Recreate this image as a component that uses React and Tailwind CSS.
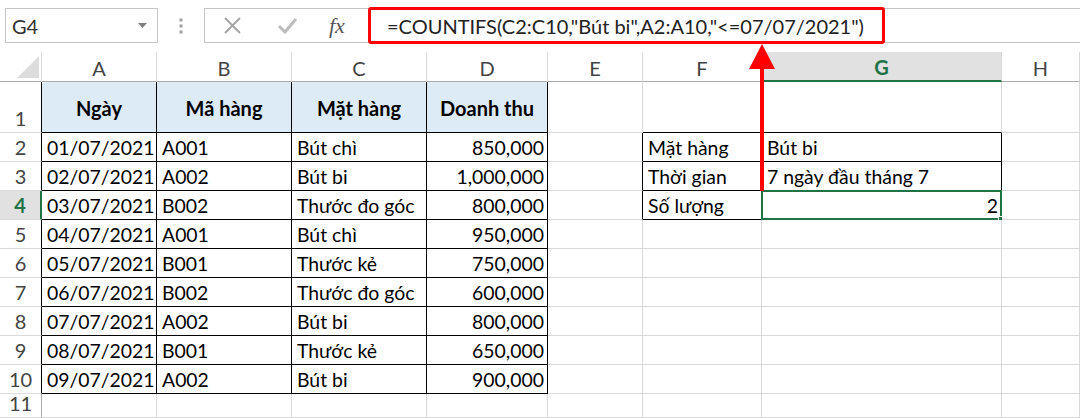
import React from 'react';

const COLS = ['A', 'B', 'C', 'D', 'E', 'F', 'G', 'H'];
const DATA = [
  ['01/07/2021', 'A001', 'Bút chì', '850,000'],
  ['02/07/2021', 'A002', 'Bút bi', '1,000,000'],
  ['03/07/2021', 'B002', 'Thước đo góc', '800,000'],
  ['04/07/2021', 'A001', 'Bút chì', '950,000'],
  ['05/07/2021', 'B001', 'Thước kẻ', '750,000'],
  ['06/07/2021', 'B002', 'Thước đo góc', '600,000'],
  ['07/07/2021', 'A002', 'Bút bi', '800,000'],
  ['08/07/2021', 'B001', 'Thước kẻ', '650,000'],
  ['09/07/2021', 'A002', 'Bút bi', '900,000'],
];
const HEAD = ['Ngày', 'Mã hàng', 'Mặt hàng', 'Doanh thu'];
const F_COL = ['Mặt hàng', 'Thời gian', 'Số lượng'];
const G_COL = ['Bút bi', '7 ngày đầu tháng 7', '2'];

const inT1 = (r, c) => r >= 1 && r <= 10 && c >= 0 && c <= 3;
const inT2 = (r, c) => r >= 2 && r <= 4 && c >= 5 && c <= 6;
const inAny = (r, c) => inT1(r, c) || inT2(r, c);

function content(r, c) {
  if (r === 1 && c < 4) return { text: HEAD[c], kind: 'head' };
  if (r >= 2 && r <= 10 && c < 4) return { text: DATA[r - 2][c], kind: c === 3 ? 'right' : 'left' };
  if (r >= 2 && r <= 4 && c === 5) return { text: F_COL[r - 2], kind: 'left' };
  if (r >= 2 && r <= 4 && c === 6) return { text: G_COL[r - 2], kind: r === 4 ? 'right' : 'left' };
  return null;
}

function Cell({ r, c }) {
  const rb = inAny(r, c) || inAny(r, c + 1);
  const bb = inAny(r, c) || inAny(r + 1, c);
  const ct = content(r, c);
  const align =
    ct && ct.kind === 'head'
      ? 'justify-center font-bold text-[20px]'
      : ct && ct.kind === 'right'
      ? 'justify-end pr-[3px] text-[19.4px]'
      : 'justify-start pl-[5px] text-[19.4px]';
  const fill = ct && ct.kind === 'head' ? 'bg-[#ddebf7]' : 'bg-white';
  const selected = r === 4 && c === 6;
  return (
    <div
      className={[
        'relative flex items-center border-r border-b whitespace-nowrap text-black',
        rb ? 'border-r-black' : 'border-r-[#d9d9d9]',
        bb ? 'border-b-black' : 'border-b-[#d9d9d9]',
        align,
        fill,
      ].join(' ')}
    >
      {ct ? <span className="leading-none pt-[1px]">{ct.text}</span> : null}
      {selected ? (
        <>
          <div className="absolute -left-[1px] -top-[1px] -right-[1px] -bottom-[1px] border-2 border-[#217346]" />
          <div className="absolute -right-[4px] -bottom-[4px] w-[7px] h-[7px] bg-[#217346] border border-white" />
        </>
      ) : null}
    </div>
  );
}

function RowHeader({ r }) {
  const sel = r === 4;
  return (
    <div
      className={[
        'flex items-end justify-center pb-[1px] border-b border-b-[#d9d9d9] leading-none',
        sel ? 'bg-[#e1e1e1] text-[#217346] font-bold border-r-2 border-r-[#217346]' : 'bg-white text-[#444] border-r',
        !sel && r <= 10 ? 'border-r-black' : '',
        !sel && r > 10 ? 'border-r-[#ababab]' : '',
      ].join(' ')}
    >
      <span className="pb-[3px]">{r}</span>
    </div>
  );
}

function ColHeader({ c }) {
  const sel = c === 6;
  return (
    <div
      className={[
        'flex items-center justify-center border-r border-r-[#d9d9d9] leading-none',
        sel
          ? 'bg-[#e1e1e1] text-[#217346] font-bold border-b-2 border-b-[#217346]'
          : 'bg-white text-[#444] border-b border-b-[#ababab]',
      ].join(' ')}
    >
      <span className="pt-[2px]">{COLS[c]}</span>
    </div>
  );
}

export default function App() {
  const rowsIdx = Array.from({ length: 11 }, (_, i) => i + 1);
  return (
    <div className="relative w-[1080px] h-[418px] overflow-hidden bg-white font-['Lato','Liberation_Sans',sans-serif] text-[20px]">
      {/* formula bar */}
      <div className="h-[52px] flex items-start pt-[8px]">
        <div className="ml-[5px] w-[153px] h-[35px] border border-[#c6c6c6] flex items-center justify-between pl-[6px] pr-[10px] text-[#333]">
          <span className="leading-none">G4</span>
          <svg width="9" height="6" viewBox="0 0 9 6">
            <path d="M0 0 L9 0 L4.5 5 Z" fill="#808080" />
          </svg>
        </div>
        <div className="w-[46px] h-[35px] flex items-center justify-center">
          <svg width="4" height="16" viewBox="0 0 4 16">
            <rect x="0.5" y="0.5" width="3" height="3" fill="#a0a0a0" />
            <rect x="0.5" y="6.5" width="3" height="3" fill="#a0a0a0" />
            <rect x="0.5" y="12.5" width="3" height="3" fill="#a0a0a0" />
          </svg>
        </div>
        <div className="flex-1 h-[35px] border-y border-l border-[#c6c6c6] flex items-center">
          <div className="w-[163px] flex items-center h-full">
            <svg className="ml-[18px]" width="19" height="19" viewBox="0 0 19 19">
              <path d="M2 2 L17 17 M17 2 L2 17" stroke="#a6a6a6" strokeWidth="2" fill="none" />
            </svg>
            <svg className="ml-[35px]" width="21" height="17" viewBox="0 0 21 17">
              <path d="M2 9 L8 15 L19 2" stroke="#bdbdbd" strokeWidth="3" fill="none" />
            </svg>
            <span className="ml-[31px] text-[#555] italic font-['Liberation_Serif',serif] text-[22px] leading-none">fx</span>
          </div>
          <div className="w-[517px] h-[37px] border-[3px] border-[#ff0000] rounded-[3px] flex items-center pl-[16px] text-[#222] whitespace-nowrap">
            <span className="leading-none">=COUNTIFS(C2:C10,"Bút bi",A2:A10,"&lt;=07/07/2021")</span>
          </div>
        </div>
      </div>

      {/* grid */}
      <div className="grid grid-cols-[42px_115px_135px_135px_121px_95px_119px_240px_1fr] grid-rows-[30px_51px_repeat(9,29px)_24px]">
        <div className="relative border-r border-r-[#d9d9d9] border-b border-b-[#ababab] bg-white">
          <svg className="absolute right-[2px] bottom-[3px]" width="22" height="22" viewBox="0 0 22 22">
            <path d="M22 0 L22 22 L0 22 Z" fill="#dcdcdc" />
          </svg>
        </div>
        {COLS.map((_, c) => (
          <ColHeader key={c} c={c} />
        ))}
        {rowsIdx.map((r) => (
          <React.Fragment key={r}>
            <RowHeader r={r} />
            {COLS.map((_, c) => (
              <Cell key={c} r={r} c={c} />
            ))}
          </React.Fragment>
        ))}
      </div>

      {/* red arrow annotation */}
      <svg className="absolute left-[745px] top-[41px]" width="34" height="152" viewBox="0 0 34 152">
        <path d="M17 3 L4 28 L30 28 Z" fill="#ff0000" />
        <rect x="15" y="26" width="4" height="124" fill="#ff0000" />
      </svg>
    </div>
  );
}
